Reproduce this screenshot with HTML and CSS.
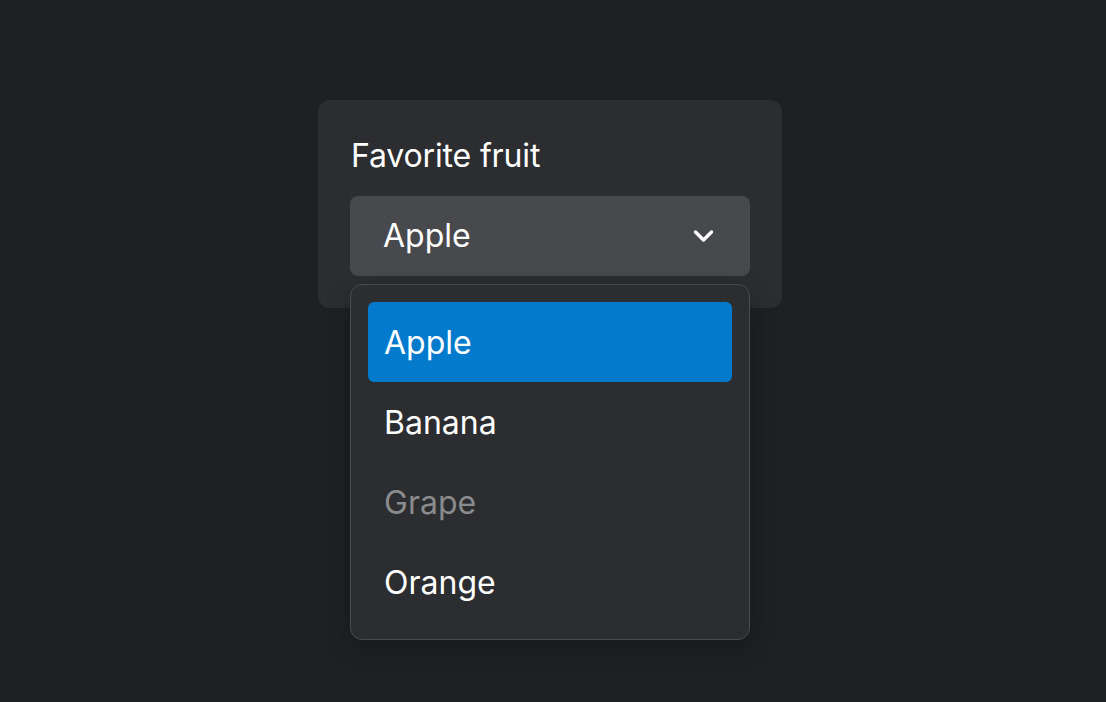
FILE: index.html
```html
<!DOCTYPE html>
<html lang="en">
<head>
<meta charset="utf-8">
<title>Favorite fruit</title>
<link rel="stylesheet" href="styles.css">
</head>
<body>
<main class="stage">
  <div class="field">
    <div class="card">
      <div class="label">Favorite fruit</div>
      <button class="select" type="button">
        <span class="value">Apple</span>
        <svg class="chev" width="21" height="14" viewBox="0 0 21 14" aria-hidden="true">
          <path d="M2.5 3 L10.5 11 L18.5 3" fill="none" stroke="#ffffff" stroke-width="3.4" stroke-linecap="round" stroke-linejoin="round"/>
        </svg>
      </button>
    </div>
    <ul class="menu">
      <li class="opt selected">Apple</li>
      <li class="opt">Banana</li>
      <li class="opt disabled">Grape</li>
      <li class="opt">Orange</li>
    </ul>
  </div>
</main>
</body>
</html>
```
FILE: styles.css
```css
html, body {
  margin: 0;
  padding: 0;
  background: #1f2022;
  height: 100%;
}
body {
  font-family: Inter, "Noto Sans", sans-serif;
  color: #ffffff;
}
.stage {
  padding-top: 100px;
  padding-right: 6px;
  display: flex;
  justify-content: center;
}
.field {
  position: relative;
  width: 464px;
}
.card {
  background: #2c2d30;
  border-radius: 12px;
  padding: 32px;
  height: 144px;
  box-sizing: content-box;
}
.label {
  font-size: 32px;
  line-height: 32px;
  height: 32px;
  margin-top: 8px;
  margin-bottom: 24px;
  padding-left: 1px;
  letter-spacing: -0.15px;
}
.select {
  width: 400px;
  height: 80px;
  border: none;
  border-radius: 8px;
  background: #48494c;
  color: #ffffff;
  display: flex;
  align-items: center;
  justify-content: space-between;
  padding: 0 36px 0 33px;
  font-family: inherit;
  font-size: 32px;
  box-sizing: border-box;
}
.value {
  margin-top: -1px;
}
.chev {
  display: block;
}
.menu {
  position: absolute;
  top: 184px;
  left: 32px;
  width: 400px;
  box-sizing: border-box;
  margin: 0;
  list-style: none;
  padding: 17px;
  background: #2c2d30;
  border: 1px solid #4a4b4e;
  border-radius: 12px;
  box-shadow: 0 8px 24px rgba(0, 0, 0, 0.25);
}
.opt {
  height: 80px;
  display: flex;
  align-items: center;
  padding: 0 16px;
  font-size: 32px;
  border-radius: 6px;
  color: #ffffff;
}
.opt.selected {
  background: #037acc;
}
.opt.disabled {
  color: #8a8b8d;
}
```
